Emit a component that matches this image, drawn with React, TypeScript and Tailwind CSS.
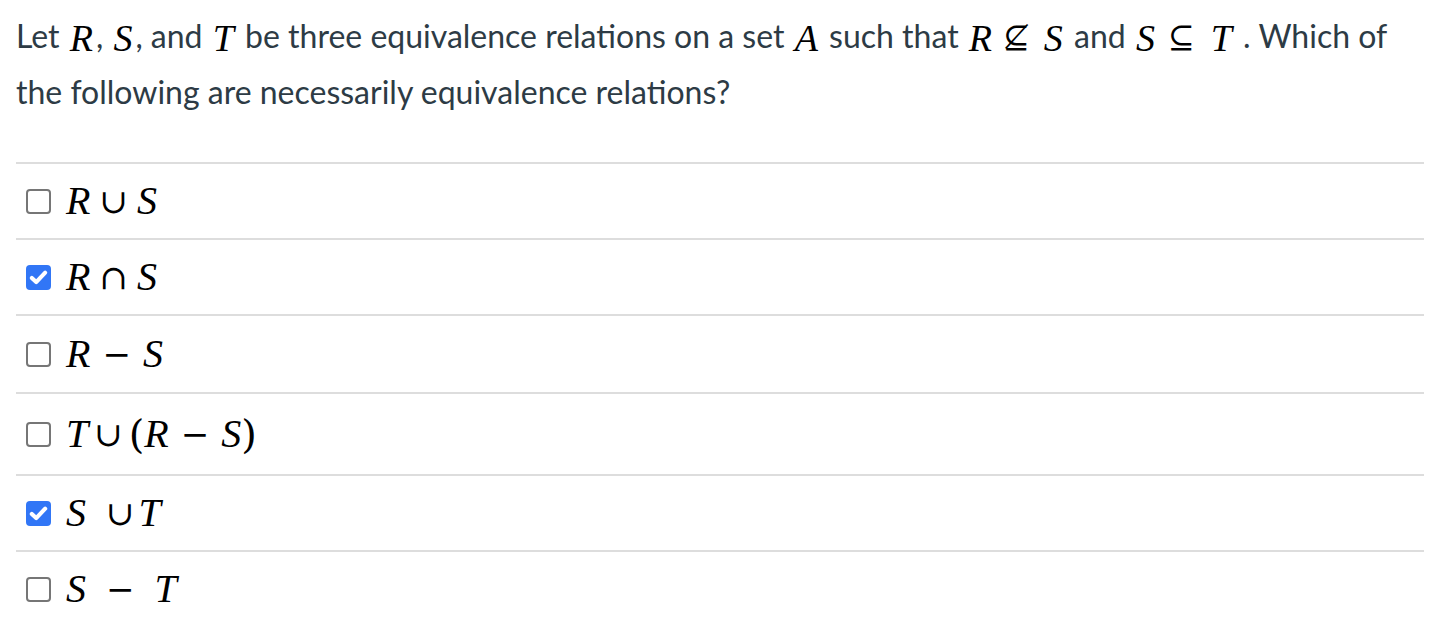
import React from "react";

const M: React.FC<{ children: React.ReactNode; className?: string }> = ({ children, className = "" }) => (
  <span
    className={`italic text-black ${className}`}
    style={{ fontFamily: '"Liberation Serif", "DejaVu Serif", serif' }}
  >
    {children}
  </span>
);

const Op: React.FC<{ children: React.ReactNode; className?: string }> = ({ children, className = "" }) => (
  <span
    className={`not-italic text-black ${className}`}
    style={{ fontFamily: '"DejaVu Serif", "Liberation Serif", serif' }}
  >
    {children}
  </span>
);

const Box: React.FC<{ checked?: boolean }> = ({ checked }) =>
  checked ? (
    <span className="flex h-[25px] w-[25px] shrink-0 items-center justify-center rounded-[4px] bg-[#3176f6]">
      <svg width="23" height="23" viewBox="0 0 20 20">
        <path d="M4.2 10.4 L8 14 L15.8 5.8" fill="none" stroke="white" strokeWidth="3.6" strokeLinecap="round" strokeLinejoin="round" />
      </svg>
    </span>
  ) : (
    <span className="h-[25px] w-[25px] shrink-0 rounded-[4px] border-2 border-[#767676] bg-white" />
  );

const Row: React.FC<{ checked?: boolean; children: React.ReactNode; h: string }> = ({ checked, children, h }) => (
  <div className={`flex items-center border-t-2 border-[#dddddd] pl-[10px] ${h}`}>
    <Box checked={checked} />
    <div className="ml-[15px] flex items-center text-[40px] leading-none">{children}</div>
  </div>
);

const PM: React.FC<{ children: React.ReactNode }> = ({ children }) => (
  <M className="ml-[2px] mr-[3px] align-[-3px] text-[38px]">{children}</M>
);

export default function App() {
  return (
    <div
      className="min-h-[642px] w-[1438px] bg-white px-4 pt-[9px] text-[#2d3b45]"
      style={{ fontFamily: 'Lato, "Liberation Sans", sans-serif' }}
    >
      <p className="text-[32px] leading-[54px]">
        Let <PM>R</PM>, <PM>S</PM>, and <PM>T</PM> be three equivalence relations on a set{" "}
        <PM>A</PM> such that <PM>R</PM>
        <Op className="ml-[8px] mr-[12px] text-[32px]">⊈</Op>
        <PM>S</PM> and <PM>S</PM>
        <Op className="ml-[10px] mr-[14px] text-[32px]">⊆</Op>
        <PM>T</PM> . Which of
        <br />
        the following are necessarily equivalence relations?
      </p>
      <div className="mt-[43px] w-[1408px]">
        <Row h="h-[76px]">
          <M>R</M>
          <Op className="mx-[9px] text-[34px]">∪</Op>
          <M>S</M>
        </Row>
        <Row h="h-[76px]" checked>
          <M>R</M>
          <Op className="mx-[9px] text-[34px]">∩</Op>
          <M>S</M>
        </Row>
        <Row h="h-[78px]">
          <M>R</M>
          <Op className="mx-[12px] text-[34px]">−</Op>
          <M>S</M>
        </Row>
        <Row h="h-[82px]">
          <M>T</M>
          <Op className="mx-[6px] text-[34px]">∪</Op>
          <Op className="text-[40px]">(</Op>
          <M>R</M>
          <Op className="mx-[12px] text-[34px]">−</Op>
          <M>S</M>
          <Op className="text-[40px]">)</Op>
        </Row>
        <Row h="h-[76px]" checked>
          <M>S</M>
          <Op className="ml-[20px] mr-[4px] text-[34px]">∪</Op>
          <M>T</M>
        </Row>
        <Row h="h-[76px]">
          <M>S</M>
          <Op className="mx-[20px] text-[34px]">−</Op>
          <M>T</M>
        </Row>
      </div>
    </div>
  );
}
